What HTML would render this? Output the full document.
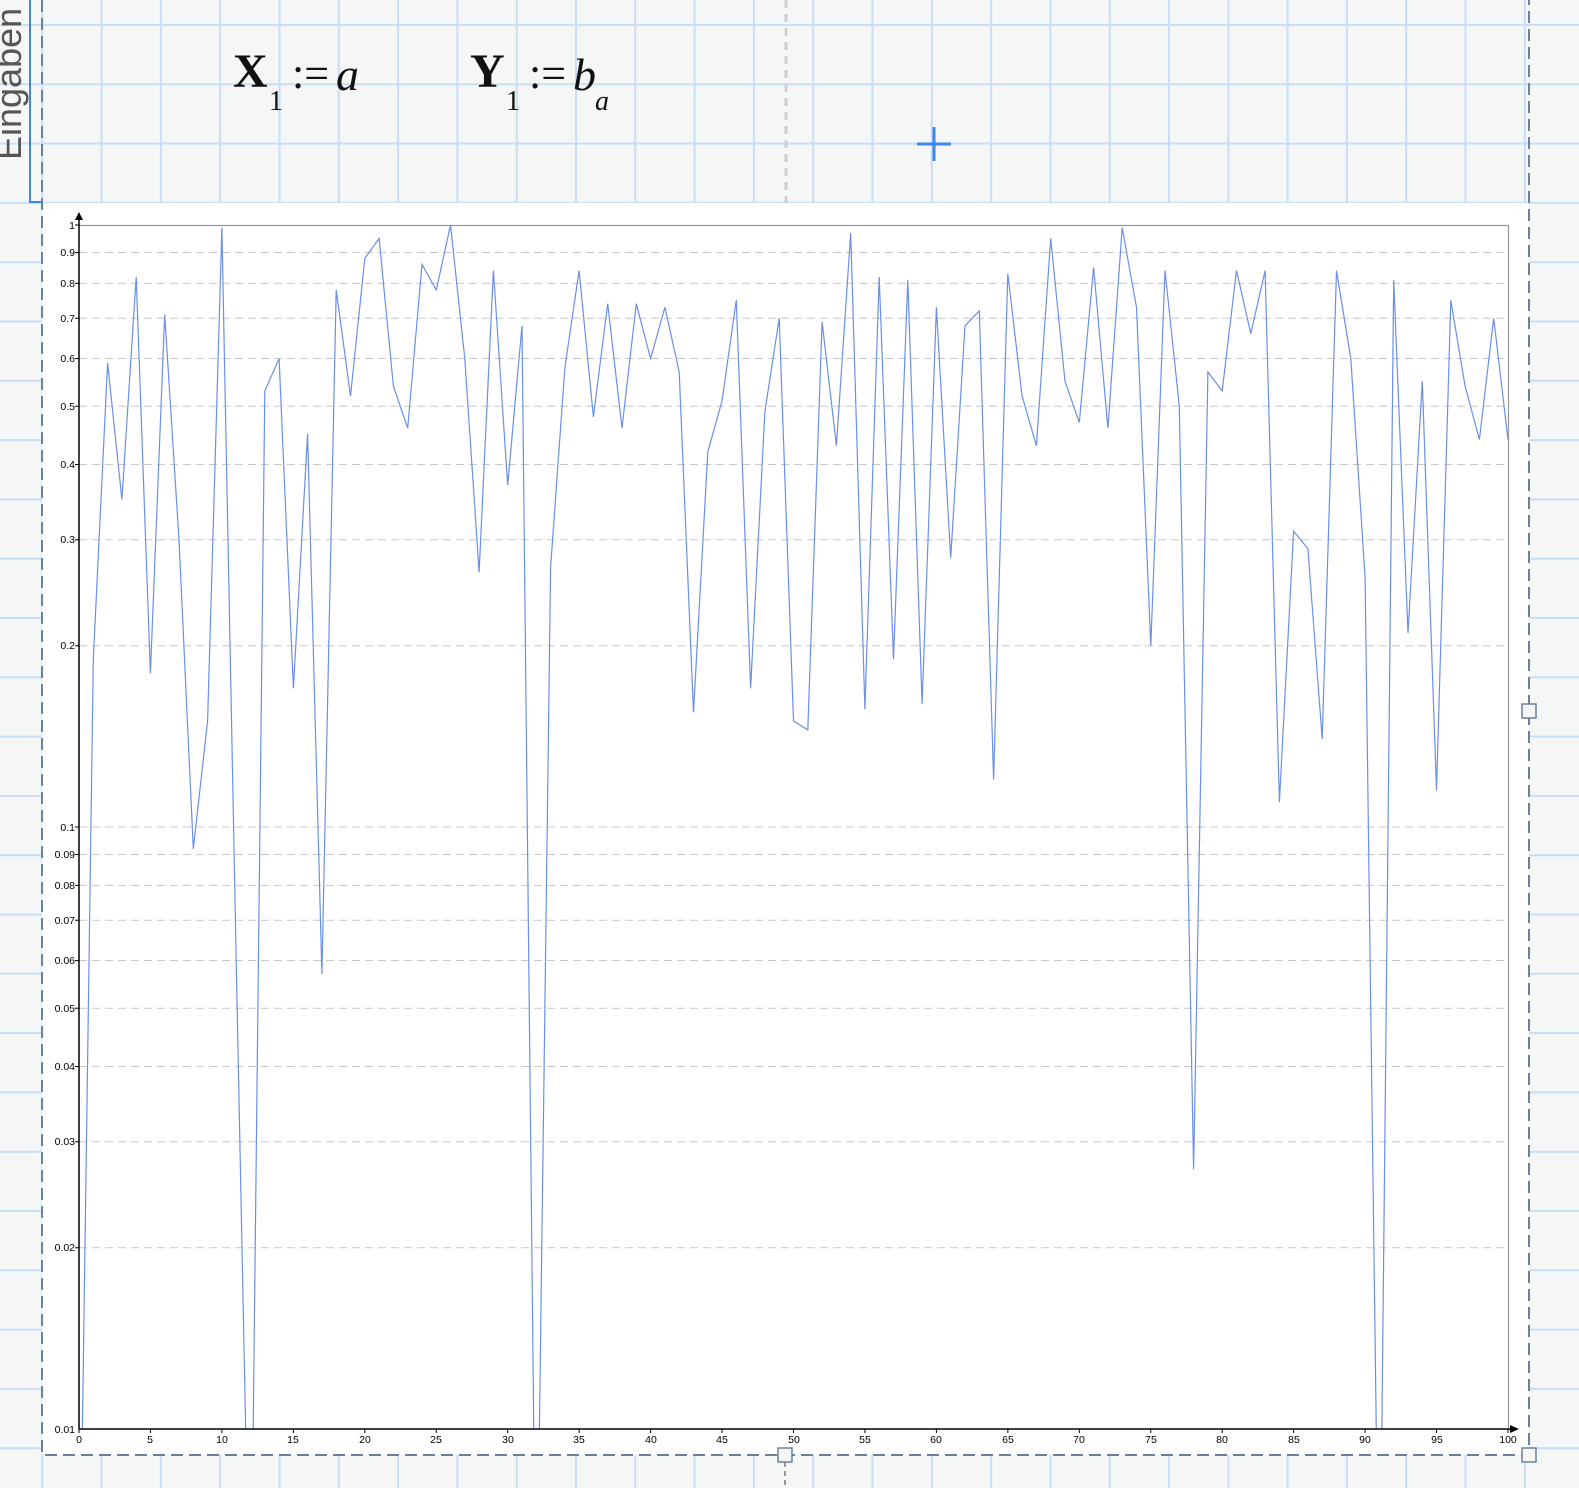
<!DOCTYPE html>
<html><head><meta charset="utf-8"><style>
html,body{margin:0;padding:0;width:1579px;height:1488px;overflow:hidden;background:#f5f7f6;position:relative;}
#eg{position:absolute;left:-9px;top:160px;transform-origin:0 0;transform:rotate(-90deg);font:36px/1 "Liberation Sans",sans-serif;color:#555;white-space:nowrap;}
.m{position:absolute;font-family:"Liberation Serif",serif;color:#111;line-height:1;}
</style></head><body>
<svg id="s" width="1579" height="1488" style="position:absolute;left:0;top:0" xmlns="http://www.w3.org/2000/svg">
<g id="grid" stroke="#c9ddf6" stroke-width="2"></g>
<rect x="42" y="203" width="1487" height="1252" fill="#fff"/>
<line x1="786" y1="0" x2="786" y2="203" stroke="#cfcfcf" stroke-width="3" stroke-dasharray="8,6"/>
<line x1="785" y1="1462" x2="785" y2="1488" stroke="#999" stroke-width="2" stroke-dasharray="5,4"/>
<path d="M30 0 V202 H42" fill="none" stroke="#3d86f0" stroke-width="2"/>
<path d="M917 144 H951 M934 127 V161" stroke="#3d86f0" stroke-width="3"/>
<g id="hg" stroke="#c8c8c8" stroke-width="1" stroke-dasharray="8,5"></g>
<path d="M79 225.5 H1508.5 V1429" fill="none" stroke="#999" stroke-width="1.2"/>
<clipPath id="c"><rect x="79" y="220" width="1430" height="1209"/></clipPath>
<polyline id="pl" clip-path="url(#c)" fill="none" stroke="#6b8fe6" stroke-width="1.2" points=""/>
<g stroke="#000" stroke-width="1.5" fill="#000">
<line x1="79" y1="1429" x2="79" y2="218"/><path d="M75 220 L79 212 L83 220Z" stroke="none"/>
<line x1="79" y1="1429" x2="1512" y2="1429"/><path d="M1510 1425 L1519 1429 L1510 1433Z" stroke="none"/>
</g>
<g id="ticks" stroke="#000" stroke-width="1"></g>
<g font-family="Liberation Sans,sans-serif" font-size="10.5" fill="#000" text-anchor="end">
<text x="75" y="229">1</text><text x="75" y="256">0.9</text><text x="75" y="287">0.8</text><text x="75" y="322">0.7</text><text x="75" y="362">0.6</text><text x="75" y="410">0.5</text><text x="75" y="468">0.4</text><text x="75" y="543">0.3</text><text x="75" y="649">0.2</text><text x="75" y="831">0.1</text><text x="75" y="858">0.09</text><text x="75" y="889">0.08</text><text x="75" y="924">0.07</text><text x="75" y="964">0.06</text><text x="75" y="1012">0.05</text><text x="75" y="1070">0.04</text><text x="75" y="1145">0.03</text><text x="75" y="1251">0.02</text><text x="75" y="1433">0.01</text>
</g>
<g font-family="Liberation Sans,sans-serif" font-size="10.5" fill="#000" text-anchor="middle">
<text x="79" y="1443">0</text><text x="150" y="1443">5</text><text x="222" y="1443">10</text><text x="293" y="1443">15</text><text x="365" y="1443">20</text><text x="436" y="1443">25</text><text x="508" y="1443">30</text><text x="579" y="1443">35</text><text x="651" y="1443">40</text><text x="722" y="1443">45</text><text x="794" y="1443">50</text><text x="865" y="1443">55</text><text x="936" y="1443">60</text><text x="1008" y="1443">65</text><text x="1079" y="1443">70</text><text x="1151" y="1443">75</text><text x="1222" y="1443">80</text><text x="1294" y="1443">85</text><text x="1365" y="1443">90</text><text x="1437" y="1443">95</text><text x="1508" y="1443">100</text>
</g>
<g fill="none" stroke="#6a8299" stroke-width="2" stroke-dasharray="12,6">
<path d="M42 0 V1455 H1529 V0"/>
</g>
<g fill="#f5f7f6" stroke="#6a8299" stroke-width="1.5">
<rect x="1522" y="1448" width="14" height="14"/><rect x="1522" y="704" width="14" height="14"/><rect x="778" y="1448" width="14" height="14"/>
</g>
</svg>
<div id="eg">Eingaben</div>
<div class="m" style="left:233px;top:48px;font-size:48px;font-weight:bold">X</div>
<div class="m" style="left:269px;top:88px;font-size:28px">1</div>
<div class="m" style="left:292px;top:52px;font-size:44px">:=</div>
<div class="m" style="left:336px;top:52px;font-size:46px;font-style:italic">a</div>
<div class="m" style="left:470px;top:48px;font-size:48px;font-weight:bold">Y</div>
<div class="m" style="left:506px;top:88px;font-size:28px">1</div>
<div class="m" style="left:529px;top:52px;font-size:44px">:=</div>
<div class="m" style="left:573px;top:52px;font-size:46px;font-style:italic">b</div>
<div class="m" style="left:595px;top:88px;font-size:28px;font-style:italic">a</div>
<script>
var ns="http://www.w3.org/2000/svg";
function L(g,x1,y1,x2,y2){var l=document.createElementNS(ns,"line");l.setAttribute("x1",x1);l.setAttribute("y1",y1);l.setAttribute("x2",x2);l.setAttribute("y2",y2);document.getElementById(g).appendChild(l);}
for(var x=42.3;x<1579;x+=59.3)L("grid",x,0,x,1488);
for(var y=25;y<1488;y+=59.3)L("grid",0,y,1579,y);
function Y(v){return 1429-(Math.log10(v)+2)*602;}
[0.9,0.8,0.7,0.6,0.5,0.4,0.3,0.2,0.1,0.09,0.08,0.07,0.06,0.05,0.04,0.03,0.02].forEach(function(v){var y=Y(v);L("hg",79,y,1508,y);L("ticks",75,y,79,y);});
L("ticks",75,225,79,225);
for(var k=0;k<=20;k++){var x=79+71.45*k;L("ticks",x,1429,x,1433);}
var d=[0.004,0.19,0.59,0.35,0.82,0.18,0.71,0.3,0.092,0.15,0.99,0.06,0.004,0.53,0.6,0.17,0.45,0.057,0.78,0.52,0.88,0.95,0.54,0.46,0.86,0.78,1.0,0.6,0.265,0.84,0.37,0.68,0.004,0.27,0.58,0.84,0.48,0.74,0.46,0.74,0.6,0.73,0.57,0.155,0.42,0.51,0.75,0.17,0.49,0.7,0.15,0.145,0.69,0.43,0.97,0.157,0.82,0.19,0.81,0.16,0.73,0.28,0.68,0.72,0.12,0.83,0.52,0.43,0.95,0.55,0.47,0.85,0.46,0.99,0.73,0.2,0.84,0.5,0.027,0.57,0.53,0.84,0.66,0.84,0.11,0.31,0.29,0.14,0.84,0.6,0.26,0.004,0.81,0.21,0.55,0.115,0.75,0.54,0.44,0.7,0.44];
var p=d.map(function(v,i){return (79+i*14.29).toFixed(1)+","+Y(v).toFixed(1);}).join(" ");
document.getElementById("pl").setAttribute("points",p);
</script>
</body></html>
